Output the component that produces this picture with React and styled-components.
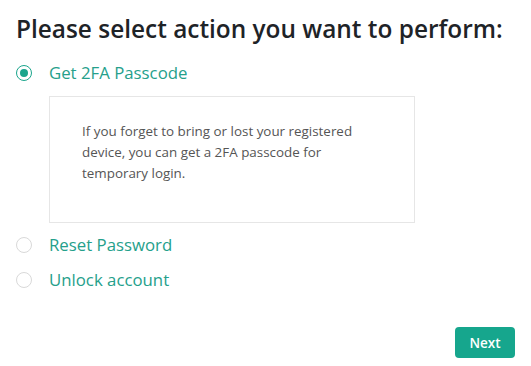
import React, { useState } from "react";
import styled, { createGlobalStyle } from "styled-components";

const Global = createGlobalStyle`
  html, body { margin: 0; padding: 0; background: #fff; }
  body { font-family: "Open Sans", "Noto Sans", sans-serif; }
`;

const Page = styled.div`
  width: 531px;
  height: 366px;
  box-sizing: border-box;
  padding: 13px 16px 0 16px;
  display: flex;
  flex-direction: column;
`;

const Title = styled.h1`
  margin: 0;
  font-size: 24.4px;
  line-height: 32px;
  font-weight: 600;
  color: #1e2327;
  letter-spacing: 0;
  white-space: nowrap;
`;

const Options = styled.div`
  display: flex;
  flex-direction: column;
  margin-top: 16px;
`;

const Option = styled.label`
  display: flex;
  align-items: center;
  gap: 17px;
  height: 24px;
  margin-top: ${(p) => p.$mt || 0}px;
  cursor: pointer;
`;

const Radio = styled.span`
  width: 16px;
  height: 16px;
  box-sizing: border-box;
  border-radius: 50%;
  border: 1px solid ${(p) => (p.$checked ? "#1aa58c" : "#d9d9d9")};
  display: flex;
  align-items: center;
  justify-content: center;
  flex: none;
  &::after {
    content: "";
    width: 8px;
    height: 8px;
    border-radius: 50%;
    background: #1aa58c;
    display: ${(p) => (p.$checked ? "block" : "none")};
  }
`;

const OptionText = styled.span`
  font-size: 16.8px;
  color: #25a08b;
  line-height: 24px;
`;

const InfoBox = styled.div`
  margin: 11px 0 0 33px;
  width: 366px;
  height: 127px;
  box-sizing: border-box;
  border: 1px solid #e6e6e6;
  padding: 24px 48px 24px 32px;
  font-size: 13.4px;
  line-height: 21px;
  color: #555;
`;

const Footer = styled.div`
  display: flex;
  justify-content: flex-end;
  margin-top: 35px;
`;

const NextButton = styled.button`
  width: 60px;
  height: 31px;
  border: none;
  border-radius: 4px;
  background: #16a68d;
  color: #fff;
  font-family: "Open Sans", sans-serif;
  font-size: 13.5px;
  font-weight: 600;
  cursor: pointer;
`;

const options = [
  { id: "2fa", label: "Get 2FA Passcode" },
  { id: "reset", label: "Reset Password" },
  { id: "unlock", label: "Unlock account" },
];

export default function App() {
  const [sel, setSel] = useState("2fa");
  return (
    <Page>
      <Global />
      <Title>Please select action you want to perform:</Title>
      <Options>
        {options.map((o, i) => (
          <React.Fragment key={o.id}>
            <Option $mt={i === 0 ? 0 : i === 1 ? 10 : 11} onClick={() => setSel(o.id)}>
              <Radio $checked={sel === o.id} />
              <OptionText>{o.label}</OptionText>
            </Option>
            {o.id === "2fa" && sel === "2fa" && (
              <InfoBox>
                If you forget to bring or lost your registered device, you can get a 2FA passcode for temporary login.
              </InfoBox>
            )}
          </React.Fragment>
        ))}
      </Options>
      <Footer>
        <NextButton>Next</NextButton>
      </Footer>
    </Page>
  );
}
